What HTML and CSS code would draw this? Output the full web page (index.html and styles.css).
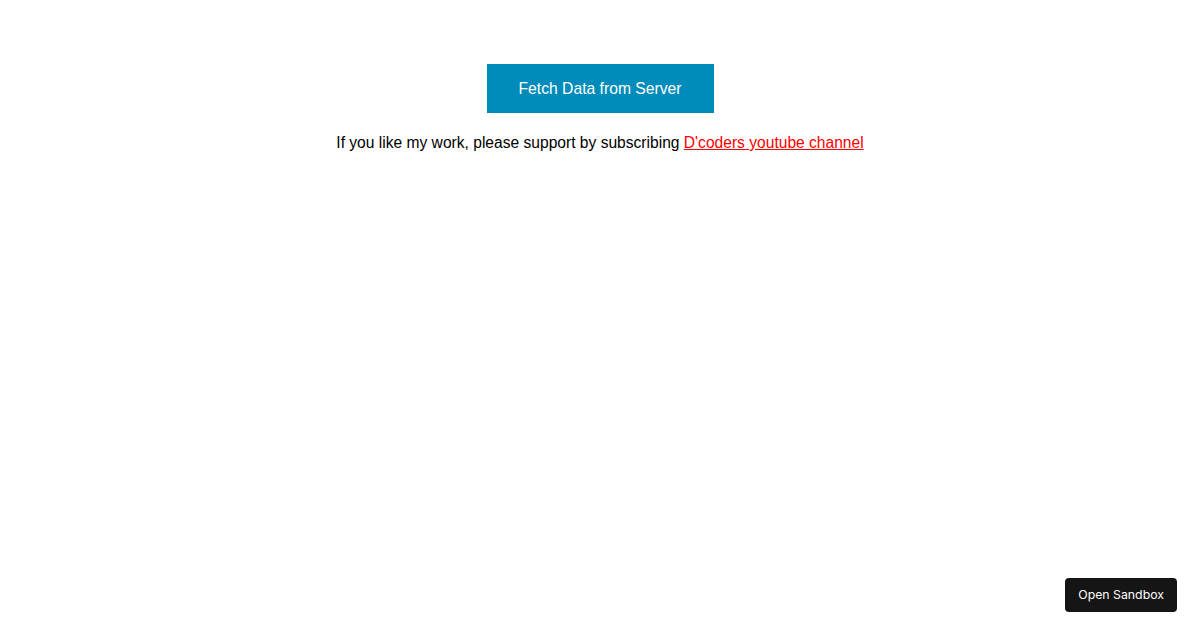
FILE: index.html
```html
<!DOCTYPE html>
<html lang="en">
<head>
  <meta charset="UTF-8">
  <meta name="viewport" content="width=device-width, initial-scale=1.0">
  <title>Fetch Data</title>
  <link rel="stylesheet" href="styles.css">
</head>
<body>
  <div class="app">
    <button class="fetch-btn">Fetch Data from Server</button>
    <p class="support">If you like my work, please support by subscribing <a href="#">D'coders youtube channel</a></p>
  </div>
  <a class="sandbox-btn" href="#">Open Sandbox</a>
</body>
</html>
```

FILE: styles.css
```css
body {
    font-family: "Liberation Sans", Arial, sans-serif;
    margin: 0;
    background: #fff;
    color: #000;
}
.app {
    display: flex;
    flex-direction: column;
    align-items: center;
    padding-top: 64px;
}
.fetch-btn {
    background-color: #008cba;
    color: #fff;
    border: none;
    font-family: "Liberation Sans", Arial, sans-serif;
    font-size: 15.7px;
    width: 227px;
    height: 49px;
    padding: 0;
    cursor: pointer;
}
.support {
    font-size: 15.6px;
    margin: 21px 0 0;
}
.support a {
    color: red;
}
.sandbox-btn {
    position: fixed;
    right: 23px;
    bottom: 18px;
    background: #151515;
    color: #fff;
    font-family: Inter, "Liberation Sans", sans-serif;
    font-size: 12.3px;
    text-decoration: none;
    padding: 0 13px;
    height: 34px;
    line-height: 34px;
    border-radius: 4px;
}
```
